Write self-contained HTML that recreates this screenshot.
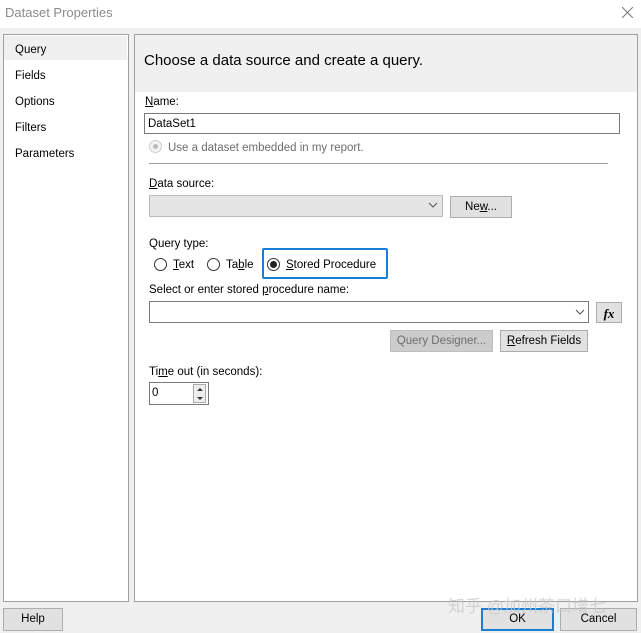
<!DOCTYPE html>
<html><head><meta charset="utf-8"><style>
*{margin:0;padding:0;box-sizing:border-box}
body{width:641px;height:633px;background:#f0f0f0;font-family:"Liberation Sans","Noto Sans CJK SC",sans-serif;font-size:11.5px;color:#000;position:relative;overflow:hidden}
.a{position:absolute}
.t{position:absolute;margin-top:1px}
.btn{position:absolute;background:#e1e1e1;border:1px solid #adadad;text-align:center;line-height:21px;font-size:11.5px}
.rad{position:absolute;width:13px;height:13px;border:1px solid #333;border-radius:50%;background:#fff}
u{text-decoration:underline}
</style></head><body>
<div class="a" style="left:0;top:0;width:641px;height:28px;background:#fff"></div>
<div class="a" style="left:5px;top:5px;font-size:13px;color:#8a8a8a">Dataset Properties</div>
<svg class="a" style="left:622px;top:7px" width="11" height="11"><path d="M0 0L11 11M11 0L0 11" stroke="#777" stroke-width="1"/></svg>

<div class="a" style="left:3px;top:34px;width:126px;height:568px;background:#fff;border:1px solid #a0a0a0"></div>
<div class="a" style="left:4px;top:36px;width:123px;height:24px;background:#f0f0f0"></div>
<div class="t" style="left:15px;top:42px;line-height:14px">Query</div>
<div class="t" style="left:15px;top:68px;line-height:14px">Fields</div>
<div class="t" style="left:15px;top:94px;line-height:14px">Options</div>
<div class="t" style="left:15px;top:120px;line-height:14px">Filters</div>
<div class="t" style="left:15px;top:146px;line-height:14px">Parameters</div>

<div class="a" style="left:134px;top:34px;width:504px;height:568px;background:#fff;border:1px solid #a0a0a0"></div>
<div class="a" style="left:135px;top:35px;width:502px;height:57px;background:#f0f0f0"></div>
<div class="a" style="left:144px;top:52px;font-size:15px">Choose a data source and create a query.</div>

<div class="t" style="left:145px;top:95px"><u>N</u>ame:</div>
<div class="a" style="left:144px;top:113px;width:476px;height:21px;border:1px solid #7a7a7a;padding:4px 3px;line-height:13px">DataSet1</div>
<div class="rad" style="left:149px;top:140px;border-color:#ccc;background:#f4f4f4"><div class="a" style="left:3px;top:3px;width:5px;height:5px;border-radius:50%;background:#bbb"></div></div>
<div class="t" style="left:168px;top:141px;color:#6d6d6d">Use a dataset embedded in my report.</div>
<div class="a" style="left:149px;top:163px;width:459px;height:1px;background:#a0a0a0"></div>

<div class="t" style="left:149px;top:177px"><u>D</u>ata source:</div>
<div class="a" style="left:149px;top:195px;width:294px;height:22px;background:#e5e5e5;border:1px solid #bbb"></div>
<svg class="a" style="left:428px;top:202px" width="10" height="6"><path d="M1 1L5 5L9 1" fill="none" stroke="#555"/></svg>
<div class="btn" style="left:450px;top:196px;width:62px;height:22px">Ne<u>w</u>...</div>

<div class="t" style="left:149px;top:237px">Query type:</div>
<div class="rad" style="left:154px;top:258px"></div>
<div class="t" style="left:173px;top:258px"><u>T</u>ext</div>
<div class="rad" style="left:207px;top:258px"></div>
<div class="t" style="left:226px;top:258px">Ta<u>b</u>le</div>
<div class="a" style="left:262px;top:248px;width:126px;height:31px;border:2px solid #1a7fd4;border-radius:2px"></div>
<div class="rad" style="left:267px;top:258px"><div class="a" style="left:2px;top:2px;width:7px;height:7px;border-radius:50%;background:#222"></div></div>
<div class="t" style="left:286px;top:258px"><u>S</u>tored Procedure</div>

<div class="t" style="left:149px;top:283px">Select or enter stored <u>p</u>rocedure name:</div>
<div class="a" style="left:149px;top:301px;width:440px;height:22px;border:1px solid #7a7a7a;background:#fff"></div>
<svg class="a" style="left:575px;top:309px" width="10" height="6"><path d="M1 1L5 5L9 1" fill="none" stroke="#555"/></svg>
<div class="btn" style="left:596px;top:302px;width:26px;height:21px;font-family:'Liberation Serif',serif;font-style:italic;font-weight:bold;font-size:13px">fx</div>
<div class="btn" style="left:390px;top:330px;width:103px;height:22px;background:#cccccc;border-color:#bfbfbf;color:#6d6d6d">Query Designer...</div>
<div class="btn" style="left:500px;top:330px;width:88px;height:22px"><u>R</u>efresh Fields</div>

<div class="t" style="left:149px;top:365px">Ti<u>m</u>e out (in seconds):</div>
<div class="a" style="left:149px;top:382px;width:60px;height:23px;border:1px solid #7a7a7a;background:#fff;padding:3px 2px;line-height:15px">0</div>
<div class="a" style="left:193px;top:384px;width:13px;height:19px;border:1px solid #aaa;background:#eee"></div>
<svg class="a" style="left:196px;top:387px" width="8" height="14"><path d="M1 4L4 1L7 4Z M1 10L4 13L7 10Z" fill="#333"/></svg>

<div class="btn" style="left:3px;top:608px;width:60px;height:23px">Help</div>
<div class="btn" style="left:481px;top:608px;width:73px;height:23px;border:2px solid #1a7fd4;line-height:19px">OK</div>
<div class="btn" style="left:560px;top:608px;width:77px;height:23px">Cancel</div>
<div class="a" style="left:448px;top:592px;font-size:17px;color:rgba(200,200,200,0.75)">知乎 @加州茶口增七</div>
</body></html>
